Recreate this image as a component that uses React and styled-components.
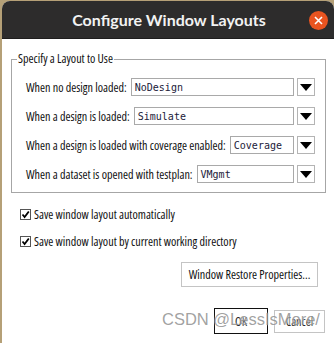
import React from 'react';
import styled, { createGlobalStyle } from 'styled-components';

const GlobalStyle = createGlobalStyle`
  html, body {
    margin: 0;
    padding: 0;
    background: #b5a077;
  }
`;

const Window = styled.div`
  position: relative;
  margin: 1px 0 0 2px;
  height: 342px;
  background: #ffffff;
  border-radius: 8px 8px 0 0;
  overflow: hidden;
  display: flex;
  flex-direction: column;
`;

const TitleBar = styled.div`
  height: 37px;
  flex: none;
  background: #2d2c2c;
  display: flex;
  align-items: center;
  justify-content: center;
  position: relative;
  border-bottom: 1px solid #1e1d1d;
`;

const Title = styled.div`
  color: #f2f2f2;
  font-family: Lato, "Open Sans", sans-serif;
  font-weight: 700;
  font-size: 16px;
  margin-left: 2px;
`;

const CloseButton = styled.div`
  position: absolute;
  right: 6px;
  top: 10px;
  width: 19px;
  height: 19px;
  border-radius: 50%;
  background: #e95420;
  display: flex;
  align-items: center;
  justify-content: center;
`;

const Content = styled.div`
  flex: 1;
  display: flex;
  flex-direction: column;
  padding: 0 8px 0 9px;
  font-family: "Open Sans", sans-serif;
  font-stretch: condensed;
  font-size: 12.1px;
  color: #111;
`;

const Group = styled.fieldset`
  margin: 13px 0 0 0;
  padding: 12px 10px 9px 14px;
  border: 1px solid #a6a6a6;
  box-shadow: inset 1px 1px 0 #fff;
  display: flex;
  flex-direction: column;
  gap: 11px;
  min-width: 0;
`;

const Legend = styled.legend`
  padding: 0 1px;
  margin-left: -9px;
  line-height: 14px;
`;

const Row = styled.div`
  display: flex;
  align-items: center;
  height: 18px;
  gap: 4px;
`;

const Label = styled.span`
  white-space: nowrap;
`;

const Combo = styled.div`
  flex: 1;
  min-width: 0;
  display: flex;
  gap: 3px;
  height: 18px;
`;

const Field = styled.div`
  flex: 1;
  min-width: 0;
  overflow: hidden;
  white-space: nowrap;
  border: 1px solid #a9a9a9;
  display: flex;
  align-items: center;
  padding-left: 3px;
  font-family: "DejaVu Sans Mono", "Liberation Mono", monospace;
  font-stretch: normal;
  font-size: 10px;
  color: #1b1b3a;
`;

const Arrow = styled.div`
  flex: none;
  width: 16px;
  border: 1px solid #b4b4b4;
  display: flex;
  align-items: center;
  justify-content: center;
`;

const Check = styled.label`
  display: flex;
  align-items: center;
  gap: 3px;
  height: 14px;
  margin: ${props => props.$top}px 0 0 9px;
`;

const Box = styled.span`
  width: 9px;
  height: 9px;
  border: 1px solid #555;
  display: flex;
  align-items: center;
  justify-content: center;
`;

const Button = styled.div`
  display: flex;
  align-items: center;
  justify-content: center;
  box-sizing: border-box;
  white-space: nowrap;
  border: 1px solid ${props => (props.$focus ? '#111' : '#c4c4c4')};
  background: #fff;
  width: ${props => props.$w}px;
  height: ${props => props.$h}px;
`;

const RestoreRow = styled.div`
  display: flex;
  justify-content: flex-end;
  margin: 14px 8px 0 0;
`;

const Actions = styled.div`
  display: flex;
  justify-content: flex-end;
  align-items: center;
  gap: 6px;
  margin: 21px 1px 0 0;
`;

const Watermark = styled.div`
  position: absolute;
  left: 160px;
  top: 309px;
  font-family: "Liberation Sans", Arial, sans-serif;
  font-size: 16.5px;
  color: rgba(120, 120, 120, 0.7);
  text-shadow: 0 0 2px #fff;
  pointer-events: none;
  white-space: nowrap;
`;

const layouts = [
  { label: 'When no design loaded:', value: 'NoDesign' },
  { label: 'When a design is loaded:', value: 'Simulate' },
  { label: 'When a design is loaded with coverage enabled:', value: 'Coverage' },
  { label: 'When a dataset is opened with testplan:', value: 'VMgmt' },
];

const DownArrow = () => (
  <svg width="12" height="7" viewBox="0 0 12 7">
    <polygon points="0,0 12,0 6,7" fill="#000" />
  </svg>
);

const Tick = () => (
  <svg width="9" height="9" viewBox="0 0 9 9">
    <path d="M1.5 4.5 L3.6 7 L7.8 1.5" stroke="#000" strokeWidth="1.8" fill="none" />
  </svg>
);

const App = () => (
  <React.Fragment>
    <GlobalStyle />
    <Window>
      <TitleBar>
        <Title>Configure Window Layouts</Title>
        <CloseButton>
          <svg width="9" height="9" viewBox="0 0 9 9">
            <path d="M1 1 L8 8 M8 1 L1 8" stroke="#fff" strokeWidth="1.6" />
          </svg>
        </CloseButton>
      </TitleBar>

      <Content>
        <Group>
          <Legend>Specify a Layout to Use</Legend>
          {layouts.map(item => (
            <Row key={item.value}>
              <Label>{item.label}</Label>
              <Combo>
                <Field>{item.value}</Field>
                <Arrow><DownArrow /></Arrow>
              </Combo>
            </Row>
          ))}
        </Group>

        <Check $top={14}>
          <Box><Tick /></Box>
          Save window layout automatically
        </Check>
        <Check $top={13}>
          <Box><Tick /></Box>
          Save window layout by current working directory
        </Check>

        <RestoreRow>
          <Button $w={137} $h={25}>Window Restore Properties...</Button>
        </RestoreRow>

        <Actions>
          <Button $focus $w={54} $h={26}>OK</Button>
          <Button $w={51} $h={23}>Cancel</Button>
        </Actions>
      </Content>

      <Watermark>CSDN @LessIsMore/</Watermark>
    </Window>
  </React.Fragment>
);

export default App;
